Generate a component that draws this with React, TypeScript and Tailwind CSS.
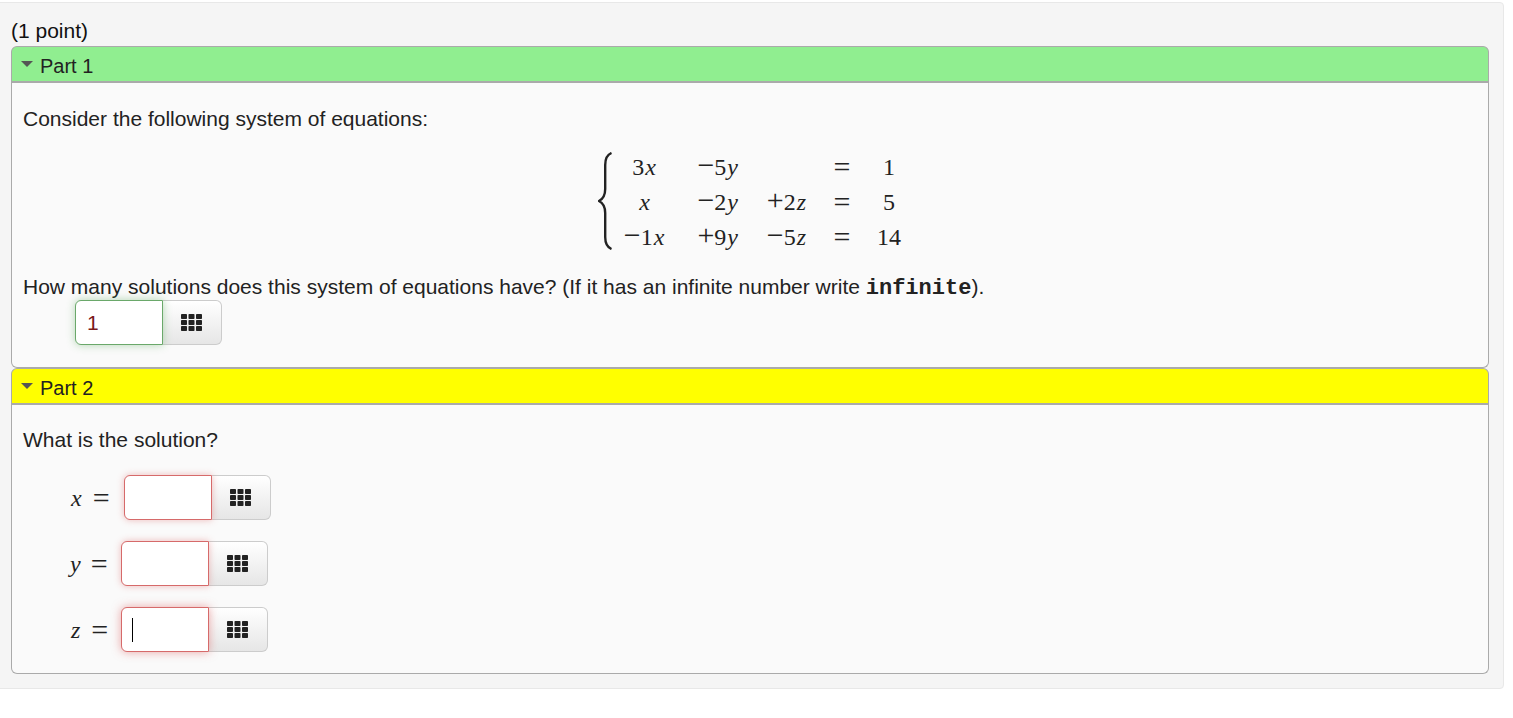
const GridIcon = () => (
  <svg width="21" height="17" viewBox="0 0 21 17" className="block">
    {[0, 7.5, 15].map((x) =>
      [0, 6, 12].map((y) => <rect key={`${x}-${y}`} x={x} y={y} width="6" height="5" rx="0.8" fill="#222" />)
    )}
  </svg>
);

const Field = ({ value, tone, caret, strong }: { value?: string; tone: "green" | "red"; caret?: boolean; strong?: boolean }) => (
  <div className="flex h-[45px]">
    <div
      className={`relative z-10 flex h-[45px] w-[88px] items-center rounded-l-[6px] border bg-white pl-[11px] text-[21px] text-[#7a1a1a] ${
        tone === "green"
          ? "border-[#6aa86a] shadow-[0_0_8px_rgba(90,170,90,0.45)]"
          : strong
          ? "border-[#d66a6a] shadow-[0_0_10px_rgba(220,80,80,0.5)]"
          : "border-[#d66a6a] shadow-[0_0_7px_rgba(220,90,90,0.4)]"
      }`}
    >
      {value}
      {caret && <span className="-ml-[1px] h-[24px] w-px bg-black" />}
    </div>
    <div className="flex h-[45px] w-[58.5px] items-center justify-center rounded-r-[6px] border border-l-0 border-[#cccccc] bg-gradient-to-b from-white to-[#e6e6e6]">
      <GridIcon />
    </div>
  </div>
);

const Header = ({ label, color }: { label: string; color: string }) => (
  <div className={`flex h-[37px] items-center rounded-t-[6px] border border-b-2 border-[#aaaaaa] pl-[9px] pt-[4px] text-[20px] text-[#222222] ${color}`}>
    <span className="mb-[5px] h-0 w-0 border-x-[6px] border-t-[6px] border-x-transparent border-t-[#555555]" />
    <span className="ml-[7px]">{label}</span>
  </div>
);

const V = ({ children }: { children: React.ReactNode }) => <i className="ml-[1px] italic">{children}</i>;
const Op = ({ children }: { children: React.ReactNode }) => <span className="text-[30px] leading-[0]">{children}</span>;

const Cell = ({ children, align = "center" }: { children?: React.ReactNode; align?: "center" | "right" }) => (
  <div className={`flex h-[35px] items-center whitespace-pre ${align === "right" ? "justify-end" : "justify-center"}`}>
    <span>{children}</span>
  </div>
);

const rows: [React.ReactNode, React.ReactNode, React.ReactNode, string][] = [
  [<>3<V>x</V></>, <><Op>−</Op>5<V>y</V></>, null, "1"],
  [<V>x</V>, <><Op>−</Op>2<V>y</V></>, <><Op>+</Op>2<V>z</V></>, "5"],
  [<><Op>−</Op>1<V>x</V></>, <><Op>+</Op>9<V>y</V></>, <><Op>−</Op>5<V>z</V></>, "14"],
];

const Eq = ({ name, width, gap }: { name: string; width: string; gap: string }) => (
  <div className={`flex items-center font-['Liberation_Serif',serif] text-[24px] text-[#222222] ${width}`}>
    <i className="italic">{name}</i>
    <span className={`text-[30px] leading-none ${gap}`}>=</span>
  </div>
);

export default function App() {
  return (
    <div className="h-[718px] overflow-hidden bg-white font-['Liberation_Sans',Arial,sans-serif]">
      <div className="-ml-[4px] mt-[2px] h-[687px] w-[1508px] rounded-[4px] border border-[#e8e8e8] bg-[#f5f5f5] pl-[14px] pr-[14px] pt-[14px]">
        <div className="h-[29px] text-[21px] leading-[28px] text-[#111111]">(1 point)</div>

        <Header label="Part 1" color="bg-[#90ee90]" />
        <div className="h-[285px] rounded-b-[6px] border border-t-0 border-[#aaaaaa] bg-[#fafafa] pl-[11px] pt-[22px] text-[21px] leading-[28px] text-[#222222]">
          <p>Consider the following system of equations:</p>

          <div className="ml-[575px] mt-[16px] flex h-[106px] items-start">
            <svg width="16" height="98" viewBox="0 0 16 98" className="mt-[3px] shrink-0" fill="none">
              <path
                d="M13.5 1 C8.5 3 7.2 7 7.2 13 L7.2 37 C7.2 43 5 47 1 49 C5 51 7.2 55 7.2 61 L7.2 85 C7.2 91 8.5 95 13.5 97"
                stroke="#222"
                strokeWidth="2.4"
              />
            </svg>
            <div className="ml-[6px] grid grid-cols-[48px_70px_68px_24px_24px_70px] font-['Liberation_Serif',serif] text-[24px] leading-none">
              {rows.map((r, i) => (
                <div key={i} className="contents">
                  <Cell>{r[0]}</Cell>
                  <Cell align="right">{r[1]}</Cell>
                  <Cell align="right">{r[2]}</Cell>
                  <div className="col-start-5 flex h-[35px] items-center justify-center">
                    <Op>=</Op>
                  </div>
                  <Cell>{r[3]}</Cell>
                </div>
              ))}
            </div>
          </div>

          <p className="mt-[18px]">
            How many solutions does this system of equations have? (If it has an infinite number write{" "}
            <code className="font-['Liberation_Mono',monospace] text-[22px] font-bold">infinite</code>).
          </p>
          <div className="-mt-[3px] ml-[52px]">
            <Field value="1" tone="green" />
          </div>
        </div>

        <Header label="Part 2" color="bg-[#ffff00]" />
        <div className="h-[269px] rounded-b-[6px] border border-t-0 border-[#aaaaaa] bg-[#fafafa] pl-[11px] pt-[21px] text-[21px] leading-[28px] text-[#222222]">
          <p>What is the solution?</p>
          <div className="mt-[21px] flex flex-col gap-[21px]">
            <div className="flex items-center pl-[48px]">
              <Eq name="x" width="w-[53px]" gap="ml-[11px]" />
              <Field tone="red" />
            </div>
            <div className="flex items-center pl-[47px]">
              <Eq name="y" width="w-[51px]" gap="ml-[10px]" />
              <Field tone="red" />
            </div>
            <div className="flex items-center pl-[48px]">
              <Eq name="z" width="w-[50px]" gap="ml-[11px]" />
              <Field tone="red" caret strong />
            </div>
          </div>
        </div>
      </div>
    </div>
  );
}
